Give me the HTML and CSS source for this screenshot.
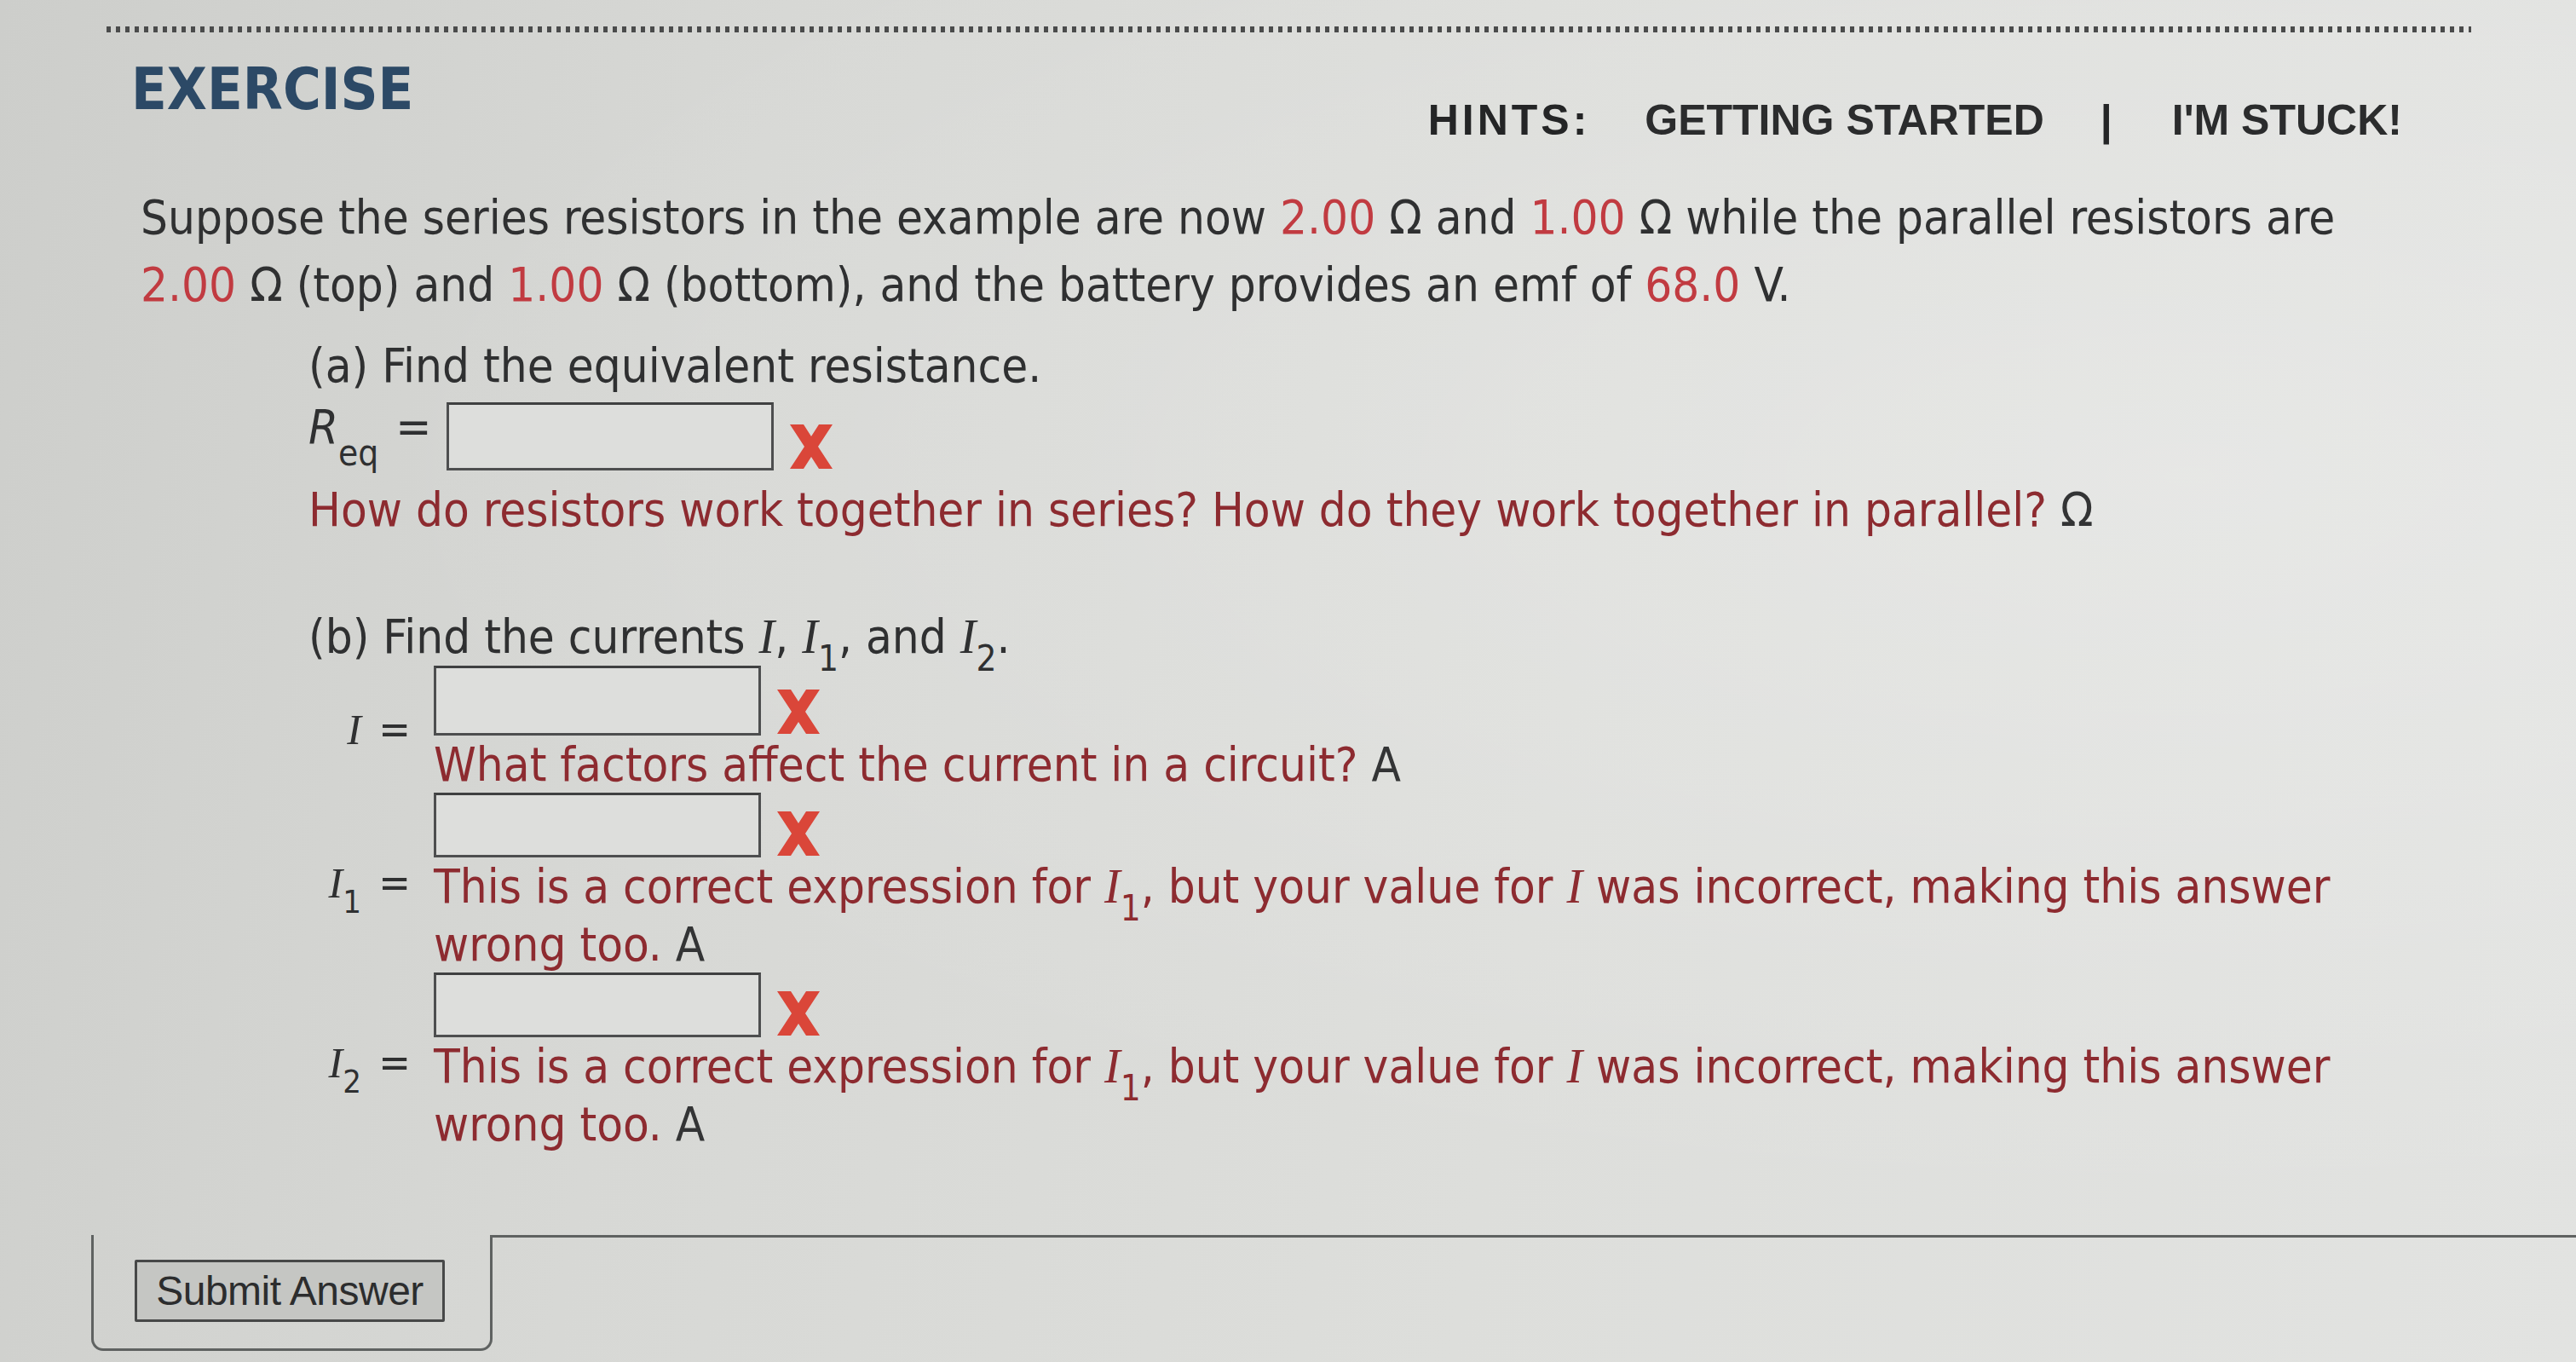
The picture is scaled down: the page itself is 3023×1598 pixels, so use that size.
FILE: index.html
```html
<!DOCTYPE html>
<html lang="en">
<head>
<meta charset="utf-8">
<title>Exercise</title>
<link rel="stylesheet" href="styles.css">
</head>
<body>
<div class="sheet">
  <div class="rule"></div>

  <header class="head">
    <h1 class="title">EXERCISE</h1>
    <nav class="hints">
      <span class="hints-label">HINTS:</span>
      <a class="hint-link">GETTING STARTED</a>
      <span class="sep">|</span>
      <a class="hint-link">I'M STUCK!</a>
    </nav>
  </header>

  <section class="question">
    <p class="prompt">Suppose the series resistors in the example are now <span class="num">2.00</span> Ω and <span class="num">1.00</span> Ω while the parallel resistors are <span class="num">2.00</span> Ω (top) and <span class="num">1.00</span> Ω (bottom), and the battery provides an emf of <span class="num">68.0</span> V.</p>

    <div class="part">
      <p class="task">(a) Find the equivalent resistance.</p>
      <div class="answer-row">
        <span class="lhs"><i class="sym">R</i><sub>eq</sub><span class="eq">=</span></span>
        <input class="field" type="text" aria-label="R eq">
        <svg class="wrong" viewBox="0 0 54 52" aria-hidden="true"><path d="M2 0H18L27 14L36 0H52L35 26L52 52H36L27 38L18 52H2L19 26Z"/></svg>
      </div>
      <p class="feedback">How do resistors work together in series? How do they work together in parallel? <span class="unit">Ω</span></p>
    </div>

    <div class="part part-b">
      <p class="task">(b) Find the currents <i class="v">I</i>, <i class="v">I</i><sub>1</sub>, and <i class="v">I</i><sub>2</sub>.</p>
      <div class="answers">
        <div class="label"><i class="v">I</i> <span class="eq-s">=</span></div>
        <div class="cell">
          <div class="entry">
            <input class="field field-lg" type="text" aria-label="I">
            <svg class="wrong" viewBox="0 0 54 52" aria-hidden="true"><path d="M2 0H18L27 14L36 0H52L35 26L52 52H36L27 38L18 52H2L19 26Z"/></svg>
          </div>
          <p class="feedback">What factors affect the current in a circuit? <span class="unit">A</span></p>
        </div>

        <div class="label"><i class="v">I</i><sub>1</sub> <span class="eq-s">=</span></div>
        <div class="cell">
          <div class="entry">
            <input class="field" type="text" aria-label="I1">
            <svg class="wrong" viewBox="0 0 54 52" aria-hidden="true"><path d="M2 0H18L27 14L36 0H52L35 26L52 52H36L27 38L18 52H2L19 26Z"/></svg>
          </div>
          <p class="feedback">This is a correct expression for <i class="v">I</i><sub>1</sub>, but your value for <i class="v">I</i> was incorrect, making this answer wrong too. <span class="unit">A</span></p>
        </div>

        <div class="label"><i class="v">I</i><sub>2</sub> <span class="eq-s">=</span></div>
        <div class="cell">
          <div class="entry">
            <input class="field" type="text" aria-label="I2">
            <svg class="wrong" viewBox="0 0 54 52" aria-hidden="true"><path d="M2 0H18L27 14L36 0H52L35 26L52 52H36L27 38L18 52H2L19 26Z"/></svg>
          </div>
          <p class="feedback">This is a correct expression for <i class="v">I</i><sub>1</sub>, but your value for <i class="v">I</i> was incorrect, making this answer wrong too. <span class="unit">A</span></p>
        </div>
      </div>
    </div>
  </section>

  <div class="foot">
    <div class="tab"><button class="submit" type="button">Submit Answer</button></div>
    <div class="rest"></div>
  </div>
</div>
</body>
</html>
```

FILE: styles.css
```css
* { box-sizing: border-box; }

html, body {
  margin: 0;
  height: 100%;
}

body {
  overflow: hidden;
  font-family: "DejaVu Sans Condensed", "DejaVu Sans", Verdana, sans-serif;
  font-stretch: condensed;
  font-size: 56px;
  color: #2f3031;
  background:
    radial-gradient(ellipse at 85% 35%, rgba(255, 255, 255, 0.22), rgba(255, 255, 255, 0) 60%),
    linear-gradient(100deg, #cdcecb 0%, #d7d8d5 28%, #dddedb 60%, #e2e3e1 100%);
}

.sheet {
  width: 3023px;
  height: 1598px;
  padding-top: 31px;
}

/* dashed rule above the exercise header */
.rule {
  height: 7px;
  margin: 0 123px 0 125px;
  background: repeating-linear-gradient(to right, #4a4b4b 0 5px, transparent 5px 11px);
}

/* header: title + hint links */
.head {
  display: flex;
  justify-content: space-between;
  align-items: flex-start;
  padding: 36px 204px 0 154px;
}

.title {
  margin: 0;
  font: bold 68px/62px "DejaVu Sans Condensed", "DejaVu Sans", Verdana, sans-serif;
  font-stretch: condensed;
  color: #2c4966;
}

.hints {
  display: flex;
  align-items: baseline;
  padding-top: 42px;
  font: bold 50px/50px "Liberation Sans", Arial, sans-serif;
  font-stretch: normal;
  color: #242526;
}

.hints-label {
  letter-spacing: 4px;
  margin-right: 64px;
}

.hint-link { color: #2b2c2d; }

.sep { margin: 0 70px 0 66px; }

/* question body */
.question {
  padding: 0 223px 0 165px;
}

.prompt {
  margin: 49px 0 0;
  line-height: 79px;
}

.num { color: #c13b41; }

.part { margin-left: 197px; }

.task {
  margin: 22px 0 0;
  line-height: 67px;
}

.part-b .task { margin-top: 82px; }

.v {
  font-family: "Liberation Serif", "Times New Roman", serif;
  font-style: italic;
  font-stretch: normal;
  font-size: 56px;
}

sub {
  font-size: 42px;
  line-height: 0;
  vertical-align: -21px;
}

/* answer field rows */
.answer-row,
.entry {
  display: flex;
  align-items: flex-end;
}

.answer-row { margin-top: 10px; }

.lhs {
  line-height: 56px;
  padding-bottom: 20px;
  white-space: nowrap;
}

.sym { font-style: oblique; }

.lhs sub { vertical-align: -26px; }

.eq { margin: 0 18px 0 20px; }

.field {
  display: block;
  width: 384px;
  height: 76px;
  margin: 0;
  padding: 0 10px;
  border: 3px solid #4d4e4f;
  border-top-color: #3f4041;
  background: #dddedc;
  font: inherit;
}

.answer-row .field { height: 80px; }

.field-lg { height: 82px; }

.wrong {
  width: 54px;
  height: 52px;
  margin: 0 0 2px 17px;
  fill: #da4639;
}

.feedback {
  margin: 0;
  line-height: 67px;
  color: #8d2b30;
}

.answer-row + .feedback { margin-top: 12px; }

.unit { color: #333435; }

/* part (b): label column + answer column */
.answers {
  display: grid;
  grid-template-columns: 120px 1fr;
  column-gap: 27px;
}

.label {
  align-self: center;
  justify-self: end;
  font-size: 50px;
  line-height: 50px;
  white-space: nowrap;
}

.label .v { font-size: 50px; }

.label sub {
  font-size: 38px;
  vertical-align: -18px;
}

.eq-s { margin-left: 6px; }

/* footer tab with the submit button */
.foot {
  display: flex;
  height: 136px;
  margin-top: 97px;
}

.tab {
  width: 471px;
  margin-left: 107px;
  padding: 29px 0 0 48px;
  border: 3px solid #5f6261;
  border-top: 0;
  border-radius: 0 0 14px 14px;
}

.rest {
  flex: 1;
  border-top: 3px solid #5f6261;
}

.submit {
  width: 364px;
  height: 73px;
  padding: 0;
  border: 3px solid #474848;
  border-radius: 2px;
  background: #c5c6c3;
  color: #2c2d2e;
  font: 48px/1 "Liberation Sans", Arial, sans-serif;
  font-stretch: normal;
  letter-spacing: -0.5px;
}
```
